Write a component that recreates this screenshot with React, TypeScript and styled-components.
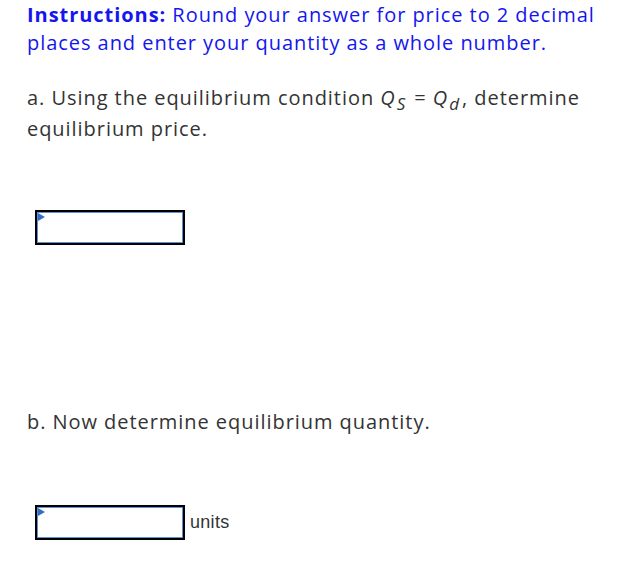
import React from 'react'
import styled, { createGlobalStyle } from 'styled-components'

const GlobalStyle = createGlobalStyle`
  body {
    margin: 0;
    background: #ffffff;
    font-family: "Open Sans", Lato, sans-serif;
  }
`

const Page = styled.div`
  width: 626px;
  height: 571px;
  padding: 1px 14px 0 27px;
  box-sizing: border-box;
`

const Instructions = styled.p`
  margin: 0;
  color: #1515ee;
  font-size: 20px;
  letter-spacing: 0.95px;
  line-height: 28px;
`

const Question = styled.p<{ top: number }>`
  margin: ${(p) => p.top}px 0 0 0;
  color: #333333;
  font-size: 20px;
  letter-spacing: 0.95px;
  line-height: 31px;
`

const Var = styled.i`
  font-style: italic;
  margin-right: 1px;
`

const Sub = styled.sub`
  font-size: 17px;
  font-style: italic;
  line-height: 0;
  vertical-align: -5px;
  margin-right: 2px;
`

const AnswerRow = styled.div<{ top: number }>`
  display: flex;
  align-items: center;
  gap: 5px;
  margin: ${(p) => p.top}px 0 0 8px;
`

const InputBox = styled.div`
  position: relative;
  width: 146px;
  height: 31px;
  border: 2px solid #000000;
  box-sizing: content-box;
  &::after {
    content: '';
    position: absolute;
    inset: 0;
    border: 1px solid #5b8fd6;
  }
`

const Flag = styled.span`
  position: absolute;
  left: 1px;
  top: 1px;
  width: 0;
  height: 0;
  border-top: 4px solid transparent;
  border-bottom: 4px solid transparent;
  border-left: 7px solid #2f6fc8;
`

const Unit = styled.span`
  font-family: "Liberation Sans", Arial, sans-serif;
  font-size: 18px;
  letter-spacing: 0.3px;
  color: #333333;
`

const Answer: React.FC<{ top: number; unit?: string }> = ({ top, unit }) => (
  <AnswerRow top={top}>
    <InputBox>
      <Flag />
    </InputBox>
    {unit && <Unit>{unit}</Unit>}
  </AnswerRow>
)

export default function App() {
  return (
    <Page>
      <GlobalStyle />
      <Instructions>
        <b>Instructions:</b> Round your answer for price to 2 decimal places and enter your
        quantity as a whole number.
      </Instructions>
      <Question top={25}>
        a. Using the equilibrium condition <Var>Q</Var><Sub>S</Sub> = <Var>Q</Var><Sub>d</Sub>,
        determine equilibrium price.
      </Question>
      <Answer top={66} />
      <Question top={161}>b. Now determine equilibrium quantity.</Question>
      <Answer top={68} unit="units" />
    </Page>
  )
}
